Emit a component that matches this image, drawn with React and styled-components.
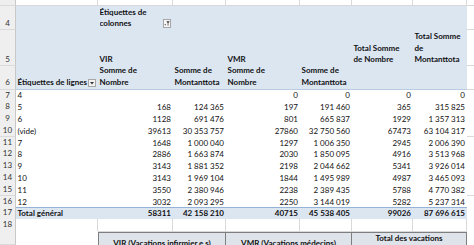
import React from "react"
import styled, { createGlobalStyle } from "styled-components"

const COLS = "16px 82px 75px 53px 74px 52px 61px 54px 1fr"
const BLUE = "#dce6f1"
const BLUE_LINE = "#95b3d7"
const GRID = "#d9d9d9"

const GlobalStyle = createGlobalStyle`
    html, body {
        margin: 0;
        padding: 0;
        background: #fff;
    }
    body {
        font-family: Lato, "Liberation Sans", sans-serif;
        font-size: 8px;
        color: #111;
    }
`

const Sheet = styled.div`
    width: 474px;
    height: 245px;
    overflow: hidden;
    display: flex;
    flex-direction: column;
`

const Row = styled.div`
    display: grid;
    grid-template-columns: ${COLS};
    height: ${p => p.$h}px;
    flex: none;
`

const RowHead = styled.div`
    box-sizing: border-box;
    background: #efefef;
    border-right: 1px solid #c8c8c8;
    border-bottom: 1px solid #dadada;
    color: #333;
    display: flex;
    align-items: flex-end;
    justify-content: center;
    line-height: 11px;
    padding-bottom: 0.5px;
`

const tones = {
    head: `background: ${BLUE};`,
    headLast: `background: ${BLUE}; border-bottom: 1px solid #b8cce4;`,
    data: `background: #fff;`,
    total: `background: ${BLUE}; border-top: 1px solid ${BLUE_LINE};`,
    grid: `background: #fff; border-right: 1px solid ${GRID}; border-bottom: 1px solid ${GRID};`,
    filler: `background: #fff; border-bottom: 1px solid ${GRID};`,
}

const Cell = styled.div`
    box-sizing: border-box;
    ${p => tones[p.$tone || "data"]}
    display: flex;
    flex-direction: column;
    justify-content: flex-end;
    align-items: ${p => (p.$num ? "flex-end" : "flex-start")};
    padding: 0 2px 0 1.5px;
    line-height: 11.6px;
    font-weight: ${p => (p.$bold ? 700 : 400)};
    white-space: nowrap;
    overflow: hidden;
`

const Split = styled.div`
    display: flex;
    align-items: flex-end;
    justify-content: space-between;
    width: 100%;
`

const Lines = styled.div`
    display: flex;
    flex-direction: column;
    overflow: hidden;
`

const DropBtn = styled.span`
    box-sizing: border-box;
    flex: none;
    width: 8px;
    height: 8px;
    margin-bottom: 2px;
    background: #f2f2f2;
    border: 1px solid #a6a6a6;
    display: flex;
    align-items: center;
    justify-content: center;
`

const FilterBtn = styled(DropBtn)`
    width: 8px;
    height: 9px;
    margin-bottom: 2px;
    background: #f7f7f7;
`

const Box = styled.div`
    box-sizing: border-box;
    grid-column: span 2;
    margin-top: 1px;
    background: #dfe3ea;
    border: 1px solid #7f7f7f;
    border-bottom: none;
    margin-left: ${p => (p.$first ? "0" : "-1px")};
    font-weight: 700;
    text-align: center;
    line-height: 11.6px;
    padding-top: ${p => p.$pt}px;
    white-space: nowrap;
    overflow: hidden;
`

const data = [
    ["4", "", "", "0", "0", "0", "0"],
    ["5", "168", "124 365", "197", "191 460", "365", "315 825"],
    ["6", "1128", "691 476", "801", "665 837", "1929", "1 357 313"],
    ["(vide)", "39613", "30 353 757", "27860", "32 750 560", "67473", "63 104 317"],
    ["7", "1648", "1 000 040", "1297", "1 006 350", "2945", "2 006 390"],
    ["8", "2886", "1 663 874", "2030", "1 850 095", "4916", "3 513 968"],
    ["9", "3143", "1 881 352", "2198", "2 044 662", "5341", "3 926 014"],
    ["10", "3143", "1 969 104", "1844", "1 495 989", "4987", "3 465 093"],
    ["11", "3550", "2 380 946", "2238", "2 389 435", "5788", "4 770 382"],
    ["12", "3032", "2 093 295", "2250", "3 144 019", "5282", "5 237 314"],
]

const total = ["Total général", "58311", "42 158 210", "40715", "45 538 405", "99026", "87 696 615"]

function DropIcon() {
    return (
        <svg width="6" height="6" viewBox="0 0 6 6">
            <polygon points="1,2 5,2 3,4.5" fill="#333" />
        </svg>
    )
}

function FilterIcon() {
    return (
        <svg width="7" height="7" viewBox="0 0 7 7">
            <polygon points="0.5,4.5 2.5,4.5 1.5,5.8" fill="#333" />
            <polygon points="2.8,1 6.6,1 5.1,3 5.1,6 4.3,6 4.3,3" fill="#333" />
        </svg>
    )
}

function DataRow({ num, values, tone, bold }) {
    return (
        <Row $h={11.8}>
            <RowHead>{num}</RowHead>
            {values.map((v, i) => (
                <Cell key={i} $tone={tone} $num={i > 0} $bold={bold}>
                    {v}
                </Cell>
            ))}
            <Cell $tone="filler" />
        </Row>
    )
}

export default function App() {
    return (
        <>
            <GlobalStyle />
            <Sheet>
                <Row $h={5.5}>
                    <RowHead />
                    {[0, 1, 2, 3, 4, 5, 6].map(i => (
                        <Cell key={i} $tone="grid" />
                    ))}
                    <Cell $tone="filler" />
                </Row>

                <Row $h={24.5}>
                    <RowHead>4</RowHead>
                    <Cell $tone="head" />
                    <Cell $tone="head" $bold>
                        <Split>
                            <Lines>
                                <span>Étiquettes de</span>
                                <span>colonnes</span>
                            </Lines>
                            <FilterBtn>
                                <FilterIcon />
                            </FilterBtn>
                        </Split>
                    </Cell>
                    <Cell $tone="head" />
                    <Cell $tone="head" />
                    <Cell $tone="head" />
                    <Cell $tone="head" />
                    <Cell $tone="head" />
                    <Cell $tone="filler" />
                </Row>

                <Row $h={36}>
                    <RowHead>5</RowHead>
                    <Cell $tone="head" />
                    <Cell $tone="head" $bold>VIR</Cell>
                    <Cell $tone="head" />
                    <Cell $tone="head" $bold>VMR</Cell>
                    <Cell $tone="head" />
                    <Cell $tone="head" $bold>
                        <span>Total Somme</span>
                        <span>de Nombre</span>
                    </Cell>
                    <Cell $tone="head" $bold>
                        <span>Total Somme</span>
                        <span>de</span>
                        <span>Montanttota</span>
                    </Cell>
                    <Cell $tone="filler" />
                </Row>

                <Row $h={23.5}>
                    <RowHead>6</RowHead>
                    <Cell $tone="headLast" $bold>
                        <Split>
                            <span>Étiquettes de lignes</span>
                            <DropBtn>
                                <DropIcon />
                            </DropBtn>
                        </Split>
                    </Cell>
                    <Cell $tone="headLast" $bold>
                        <span>Somme de</span>
                        <span>Nombre</span>
                    </Cell>
                    <Cell $tone="headLast" $bold>
                        <span>Somme de</span>
                        <span>Montanttota</span>
                    </Cell>
                    <Cell $tone="headLast" $bold>
                        <span>Somme de</span>
                        <span>Nombre</span>
                    </Cell>
                    <Cell $tone="headLast" $bold>
                        <span>Somme de</span>
                        <span>Montanttota</span>
                    </Cell>
                    <Cell $tone="headLast" />
                    <Cell $tone="headLast" />
                    <Cell $tone="filler" />
                </Row>

                {data.map((r, i) => (
                    <DataRow key={i} num={7 + i} values={r} tone="data" />
                ))}
                <DataRow num={17} values={total} tone="total" bold />

                <Row $h={11.8}>
                    <RowHead>18</RowHead>
                    {[0, 1, 2, 3, 4, 5, 6].map(i => (
                        <Cell key={i} $tone="grid" />
                    ))}
                    <Cell $tone="filler" />
                </Row>

                <Row $h={14}>
                    <RowHead />
                    <Cell />
                    <Box $first $pt={5}>VIR (Vacations infirmier.e.s)</Box>
                    <Box $pt={5}>VMR (Vacations médecins)</Box>
                    <Box $pt={0}>Total des vacations</Box>
                    <Cell />
                </Row>
            </Sheet>
        </>
    )
}
